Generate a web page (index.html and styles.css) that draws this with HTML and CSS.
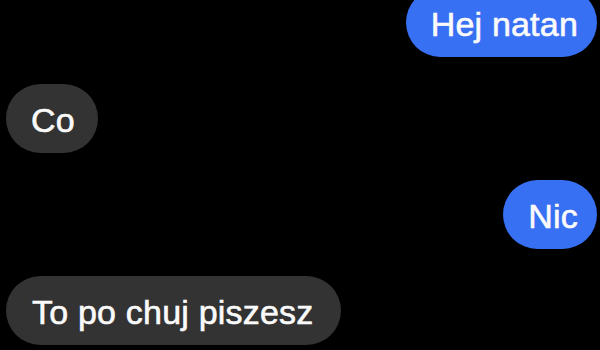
FILE: index.html
```html
<!DOCTYPE html>
<html lang="pl">
<head>
<meta charset="utf-8">
<title>Chat</title>
<link rel="stylesheet" href="styles.css">
</head>
<body>
<main class="chat">
  <div class="bubble sent">Hej natan</div>
  <div class="bubble received received-co">Co</div>
  <div class="bubble sent">Nic</div>
  <div class="bubble received">To po chuj piszesz</div>
</main>
</body>
</html>
```

FILE: styles.css
```css
html, body {
  margin: 0;
  padding: 0;
  background: #000;
  width: 600px;
  height: 350px;
  overflow: hidden;
}

.chat {
  display: flex;
  flex-direction: column;
  gap: 27px;
  margin-top: -12px;
  padding: 0 3px 0 6px;
}

.bubble {
  font-family: "Liberation Sans", Arial, sans-serif;
  font-size: 34px;
  color: #fafafa;
  -webkit-text-stroke: 0.6px #fafafa;
  letter-spacing: 0.2px;
  height: 69px;
  line-height: 69px;
  border-radius: 35px;
  box-sizing: border-box;
  white-space: nowrap;
}

.sent {
  align-self: flex-end;
  background: #3870f3;
  padding: 2px 19px 0 25px;
}

.received {
  align-self: flex-start;
  background: #333333;
  padding: 2px 28px 0 26px;
}

.received-co {
  padding: 2px 23px 0 25px;
}
```
